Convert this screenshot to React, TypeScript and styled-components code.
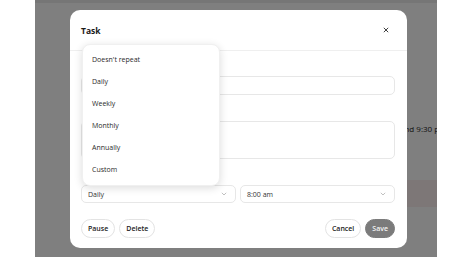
import React from "react";
import styled, { createGlobalStyle } from "styled-components";

const Global = createGlobalStyle`
  html, body { margin: 0; padding: 0; background: #ffffff; }
  body { font-family: "Open Sans", "Noto Sans", Arial, sans-serif; }
  * { box-sizing: border-box; }
`;

const Stage = styled.div`
  position: relative;
  margin-left: 35px;
  width: 402px;
  height: 257px;
  overflow: hidden;
  background: #ffffff;
`;

const Page = styled.div`
  display: flex;
  flex-direction: column;
  height: 100%;
`;

const PageTopBar = styled.div`
  height: 3px;
  background: #ececec;
`;

const PageSpacer = styled.div<{ $h: number }>`
  height: ${(p) => p.$h}px;
`;

const PageRow = styled.div<{ $h: number }>`
  height: ${(p) => p.$h}px;
  display: flex;
  align-items: center;
  padding-left: 365px;
  white-space: nowrap;
  font-size: 8px;
  color: #1c1c1c;
`;

const Banner = styled.div`
  height: 27px;
  margin-left: 355px;
  background: #fbeeee;
`;

const Overlay = styled.div`
  position: absolute;
  inset: 0;
  background: rgba(0, 0, 0, 0.5);
`;

const Modal = styled.div`
  position: absolute;
  left: 35px;
  top: 10px;
  width: 337px;
  height: 238px;
  background: #ffffff;
  border-radius: 10px;
  display: flex;
  flex-direction: column;
`;

const Header = styled.div`
  height: 41px;
  flex: none;
  display: flex;
  align-items: center;
  justify-content: space-between;
  padding: 0 16px 0 11px;
  border-bottom: 1px solid #efefef;
`;

const Title = styled.div`
  font-size: 8.5px;
  font-weight: 700;
  color: #1a1a1a;
`;

const CloseButton = styled.button`
  width: 10px;
  height: 10px;
  padding: 0;
  border: none;
  background: none;
  display: flex;
  align-items: center;
  justify-content: center;
`;

const Body = styled.div`
  flex: 1;
  display: flex;
  flex-direction: column;
  padding: 8px 12px 10px 11px;
  gap: 9px;
`;

const Field = styled.div`
  display: flex;
  flex-direction: column;
  gap: 5px;
`;

const LabelSpace = styled.div`
  height: 12px;
`;

const Input = styled.div<{ $h: number }>`
  height: ${(p) => p.$h}px;
  border: 1px solid #e7e7e7;
  border-radius: 5px;
  background: #fff;
`;

const SelectRow = styled.div`
  display: grid;
  grid-template-columns: 155px 1fr;
  gap: 4px;
`;

const Select = styled.div`
  height: 18px;
  border: 1px solid #e7e7e7;
  border-radius: 5px;
  display: flex;
  align-items: center;
  justify-content: space-between;
  padding: 0 8px 0 6px;
  font-size: 7px;
  color: #333;
`;

const Footer = styled.div`
  margin-top: auto;
  display: flex;
  justify-content: space-between;
`;

const ButtonGroup = styled.div`
  display: flex;
  gap: 4px;
`;

const Pill = styled.button<{ $primary?: boolean }>`
  height: 19px;
  padding: 0 6px;
  border-radius: 10px;
  border: 1px solid ${(p) => (p.$primary ? "#7b7b7b" : "#e3e3e3")};
  background: ${(p) => (p.$primary ? "#7b7b7b" : "#ffffff")};
  color: ${(p) => (p.$primary ? "#f4f4f4" : "#222")};
  font-family: inherit;
  font-size: 7px;
  font-weight: 600;
  line-height: 1;
`;

const Menu = styled.div`
  position: absolute;
  left: 12px;
  top: 34px;
  width: 138px;
  padding: 3px 0 5px;
  background: #ffffff;
  border: 1px solid #f0f0f0;
  border-radius: 8px;
  box-shadow: 0 2px 8px rgba(0, 0, 0, 0.14);
  display: flex;
  flex-direction: column;
`;

const MenuItem = styled.div`
  height: 22px;
  display: flex;
  align-items: center;
  padding-left: 9px;
  font-size: 7px;
  color: #2a2a2a;
`;

const Chevron = () => (
  <svg width="6" height="4" viewBox="0 0 6 4">
    <path d="M0.8 0.8 L3 3 L5.2 0.8" fill="none" stroke="#b0b0b0" strokeWidth="0.8" />
  </svg>
);

const CloseIcon = () => (
  <svg width="6" height="6" viewBox="0 0 6 6">
    <path d="M0.8 0.8 L5.2 5.2 M5.2 0.8 L0.8 5.2" stroke="#2a2a2a" strokeWidth="0.9" />
  </svg>
);

const options = ["Doesn't repeat", "Daily", "Weekly", "Monthly", "Annually", "Custom"];

export default function App() {
  return (
    <>
      <Global />
      <Stage>
        <Page>
          <PageTopBar />
          <PageSpacer $h={119} />
          <PageRow $h={12}>and 9:30 pm</PageRow>
          <PageSpacer $h={46} />
          <Banner />
        </Page>
        <Overlay />
        <Modal>
          <Header>
            <Title>Task</Title>
            <CloseButton>
              <CloseIcon />
            </CloseButton>
          </Header>
          <Body>
            <Field>
              <LabelSpace />
              <Input $h={19} />
            </Field>
            <Field>
              <LabelSpace />
              <Input $h={38} />
            </Field>
            <Field>
              <LabelSpace />
              <SelectRow>
                <Select>
                  Daily
                  <Chevron />
                </Select>
                <Select>
                  8:00 am
                  <Chevron />
                </Select>
              </SelectRow>
            </Field>
            <Footer>
              <ButtonGroup>
                <Pill>Pause</Pill>
                <Pill>Delete</Pill>
              </ButtonGroup>
              <ButtonGroup>
                <Pill>Cancel</Pill>
                <Pill $primary>Save</Pill>
              </ButtonGroup>
            </Footer>
          </Body>
          <Menu>
            {options.map((o) => (
              <MenuItem key={o}>{o}</MenuItem>
            ))}
          </Menu>
        </Modal>
      </Stage>
    </>
  );
}
